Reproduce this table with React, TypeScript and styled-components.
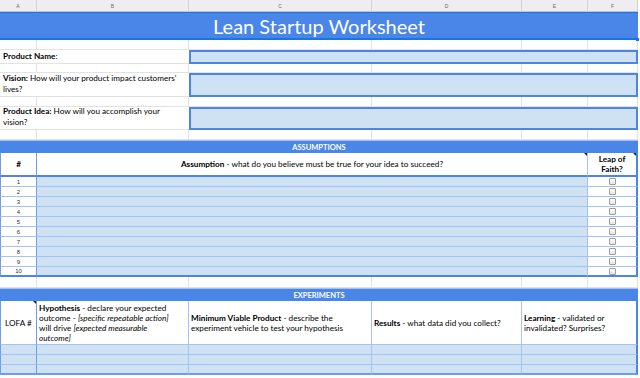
import React from 'react'
import styled, { createGlobalStyle, css } from 'styled-components'

const gridLine = '#e2e2e2'
const blue = '#4a86e8'
const midBlue = '#6d9eeb'
const paleBlue = '#a4c2f4'
const fillBlue = '#cfe2f3'
const thick = `2px solid ${blue}`

const GlobalStyle = createGlobalStyle`
  html, body {
    margin: 0;
    padding: 0;
    background: #fff;
  }
  body {
    width: 640px;
    height: 378px;
    overflow: hidden;
  }
`

const Sheet = styled.div`
  display: grid;
  width: 638px;
  grid-template-columns: 37px 152px 183px 150px 66px 50px;
  grid-template-rows:
    12px 28px 10px 14px 9px 24px 10px 23px 10px 13px 24px
    repeat(10, 10px) 11px 13px 44px repeat(3, 10px) 3px;
  font-family: Lato, 'Open Sans', sans-serif;
  font-size: 8.2px;
  color: #000;

  & > * {
    box-sizing: border-box;
    min-width: 0;
  }
`

const ColHead = styled.div`
  display: flex;
  align-items: center;
  justify-content: center;
  background: #eeeef0;
  border-right: 1px solid #d2d2d6;
  border-bottom: 1px solid #c4c4c8;
  font-family: 'Liberation Sans', Arial, sans-serif;
  font-size: 5px;
  color: #6b6b6b;
`

const Blank = styled.div`
  border-right: 1px solid ${gridLine};
  border-bottom: 1px solid ${gridLine};
`

const TitleBand = styled.div`
  grid-column: span 6;
  position: relative;
  display: flex;
  align-items: center;
  justify-content: center;
  background: ${blue};
  border-top: 1px solid #1a73e8;
  border-bottom: 2px solid #1a73e8;
  color: #fff;
  font-size: 20px;

  &::after {
    content: '';
    position: absolute;
    right: -1px;
    bottom: -3px;
    width: 3px;
    height: 3px;
    background: #1a73e8;
  }
`

const Label = styled.div`
  grid-column: span 2;
  display: flex;
  align-items: flex-end;
  padding: 0 3px 1px;
  border-bottom: 1px solid ${gridLine};
  line-height: 11px;
`

const InputBox = styled.div`
  grid-column: span 4;
  background: ${fillBlue};
  border: 2px solid ${blue};
`

const BandHeader = styled.div`
  grid-column: span 6;
  display: flex;
  align-items: center;
  justify-content: center;
  background: ${blue};
  border-top: 1px solid ${paleBlue};
  color: #fff;
  font-weight: 700;
  font-size: 7.5px;
`

type CellProps = {
  $span?: number
  $fill?: boolean
  $first?: boolean
  $edge?: boolean
  $divider?: string
  $bottom?: string
  $note?: boolean
  $center?: boolean
}

const TableCell = styled.div<CellProps>`
  grid-column: span ${({ $span }) => $span ?? 1};
  position: relative;
  display: flex;
  align-items: center;
  justify-content: ${({ $center }) => ($center ? 'center' : 'flex-start')};
  padding: 0 2px;
  background: ${({ $fill }) => ($fill ? fillBlue : '#fff')};
  border-right: ${({ $edge, $divider }) =>
    $edge ? thick : `1px solid ${$divider ?? paleBlue}`};
  border-bottom: ${({ $bottom }) => $bottom ?? `1px solid ${paleBlue}`};
  ${({ $first }) =>
    $first &&
    css`
      border-left: 1px solid ${midBlue};
    `}
  ${({ $note }) =>
    $note &&
    css`
      &::after {
        content: '';
        position: absolute;
        top: 0;
        right: 0;
        border-top: 3px solid #222;
        border-left: 3px solid transparent;
      }
    `}
`

const HeadCell = styled(TableCell)`
  line-height: 10px;
  white-space: nowrap;
  text-align: ${({ $center }) => ($center ? 'center' : 'left')};
`

const NumCell = styled(TableCell)`
  font-family: 'Liberation Sans', Arial, sans-serif;
  font-size: 6px;
  color: #333;
`

const Checkbox = styled.span`
  box-sizing: border-box;
  width: 7px;
  height: 7px;
  border: 1px solid #9c9c9c;
  border-radius: 1px;
  background: linear-gradient(#fff, #e4e4e4);
`

const COLUMNS = ['A', 'B', 'C', 'D', 'E', 'F']
const ROWS = Array.from({ length: 10 }, (_, i) => i + 1)
const EXP_ROWS = [1, 2, 3]

const BlankRow = () => (
  <>
    {COLUMNS.map((c) => (
      <Blank key={c} />
    ))}
  </>
)

export default function App() {
  return (
    <>
      <GlobalStyle />
      <Sheet>
        {COLUMNS.map((c) => (
          <ColHead key={c}>{c}</ColHead>
        ))}

        <TitleBand>Lean Startup Worksheet</TitleBand>
        <BlankRow />

        <Label>
          <span>
            <b>Product Name</b>:
          </span>
        </Label>
        <InputBox />
        <BlankRow />

        <Label>
          <span>
            <b>Vision:</b> How will your product impact customers'
            <br />
            lives?
          </span>
        </Label>
        <InputBox />
        <BlankRow />

        <Label>
          <span>
            <b>Product Idea:</b> How will you accomplish your
            <br />
            vision?
          </span>
        </Label>
        <InputBox />
        <BlankRow />

        <BandHeader>ASSUMPTIONS</BandHeader>
        <HeadCell $first $center $divider={midBlue} $bottom={thick}>
          <b>#</b>
        </HeadCell>
        <HeadCell $span={4} $center $bottom={thick} $note>
          <span>
            <b>Assumption</b> - what do you believe must be true for your idea to
            succeed?
          </span>
        </HeadCell>
        <HeadCell $edge $center $bottom={thick} $note>
          <b>
            Leap of
            <br />
            Faith?
          </b>
        </HeadCell>

        {ROWS.map((n) => {
          const bottom = n === 10 ? thick : undefined
          return (
            <React.Fragment key={n}>
              <NumCell $first $center $divider={midBlue} $bottom={bottom}>
                {n}
              </NumCell>
              <TableCell $span={4} $fill $bottom={bottom} />
              <TableCell $edge $center $bottom={bottom}>
                <Checkbox />
              </TableCell>
            </React.Fragment>
          )
        })}

        <BlankRow />

        <BandHeader>EXPERIMENTS</BandHeader>
        <HeadCell $first $center $divider={midBlue} $note>
          LOFA #
        </HeadCell>
        <HeadCell>
          <span>
            <b>Hypothesis</b> - declare your expected
            <br />
            outcome - <i>[specific repeatable action]</i>
            <br />
            will drive <i>[expected measurable</i>
            <br />
            <i>outcome]</i>
          </span>
        </HeadCell>
        <HeadCell>
          <span>
            <b>Minimum Viable Product</b> - describe the
            <br />
            experiment vehicle to test your hypothesis
          </span>
        </HeadCell>
        <HeadCell>
          <span>
            <b>Results</b> - what data did you collect?
          </span>
        </HeadCell>
        <HeadCell $span={2} $edge>
          <span>
            <b>Learning</b> - validated or
            <br />
            invalidated? Surprises?
          </span>
        </HeadCell>

        {EXP_ROWS.map((n) => {
          const bottom = n === 3 ? `2px solid ${midBlue}` : undefined
          return (
            <React.Fragment key={n}>
              <TableCell $first $fill $divider={midBlue} $bottom={bottom} />
              <TableCell $fill $bottom={bottom} />
              <TableCell $fill $bottom={bottom} />
              <TableCell $fill $bottom={bottom} />
              <TableCell $span={2} $edge $fill $bottom={bottom} />
            </React.Fragment>
          )
        })}
      </Sheet>
    </>
  )
}
